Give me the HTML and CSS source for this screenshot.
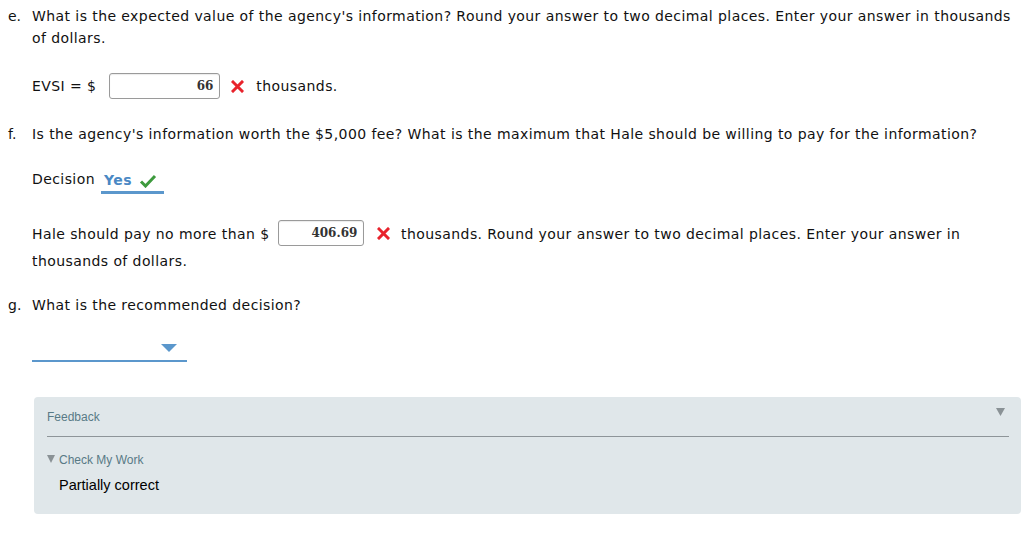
FILE: index.html
```html
<!DOCTYPE html>
<html>
<head>
<meta charset="utf-8">
<link rel="stylesheet" href="styles.css">
</head>
<body>
<div class="page">
  <div class="item item-e">
    <span class="lbl">e.</span>
    <div class="body">What is the expected value of the agency's information? Round your answer to two decimal places. Enter your answer in thousands of dollars.</div>
  </div>
  <div class="row evsi">
    <span>EVSI = $</span>
    <span class="inp w110">66</span>
    <svg class="xmark" width="13" height="13" viewBox="0 0 13 13"><path d="M2 2 L11 11 M11 2 L2 11" stroke="#e8232c" stroke-width="3" stroke-linecap="square"/></svg>
    <span>thousands.</span>
  </div>

  <div class="item item-f">
    <span class="lbl">f.</span>
    <div class="body">Is the agency's information worth the $5,000 fee? What is the maximum that Hale should be willing to pay for the information?</div>
  </div>
  <div class="row decision">
    <span>Decision</span>
    <span class="sel">
      <span class="yes">Yes</span>
      <svg class="check" width="18" height="14" viewBox="0 0 18 14"><path d="M2 7.5 L6.5 12 L16 2" fill="none" stroke="#3d9a3d" stroke-width="3"/></svg>
    </span>
  </div>

  <p class="hale">Hale should pay no more than $ <span class="inp w86">406.69</span> <svg class="xmark" width="13" height="13" viewBox="0 0 13 13"><path d="M2 2 L11 11 M11 2 L2 11" stroke="#e8232c" stroke-width="3" stroke-linecap="square"/></svg> thousands. Round your answer to two decimal places. Enter your answer in thousands of dollars.</p>

  <div class="item item-g">
    <span class="lbl">g.</span>
    <div class="body">What is the recommended decision?</div>
  </div>
  <div class="dropdown">
    <svg width="16" height="8" viewBox="0 0 16 8"><path d="M0 0 H16 L8 8 Z" fill="#5b97cc"/></svg>
  </div>

  <div class="feedback">
    <div class="fb-head">
      <span>Feedback</span>
      <svg width="9" height="8" viewBox="0 0 9 8"><path d="M0 0 H9 L4.5 8 Z" fill="#8a9296"/></svg>
    </div>
    <div class="fb-check"><svg width="8" height="8" viewBox="0 0 8 8"><path d="M0 0 H8 L4 8 Z" fill="#8a9296"/></svg><span>Check My Work</span></div>
    <div class="fb-result">Partially correct</div>
  </div>
</div>
</body>
</html>
```

FILE: styles.css
```css
html, body {
  margin: 0;
  padding: 0;
  background: #fff;
}
.page {
  font-family: "DejaVu Sans", Verdana, sans-serif;
  font-size: 14px;
  letter-spacing: 0.42px;
  color: #111;
  padding: 5px 0 0 8px;
}
.item {
  display: flex;
  line-height: 22px;
}
.lbl {
  width: 24px;
  flex: none;
  letter-spacing: 0;
}
.body {
  flex: 1;
  padding-right: 6px;
}
.row {
  display: flex;
  align-items: center;
  margin-left: 24px;
}
.evsi {
  margin-top: 24px;
  height: 26px;
}
.inp {
  display: inline-flex;
  align-items: center;
  justify-content: flex-end;
  box-sizing: border-box;
  height: 26px;
  border: 1px solid #9a9a9a;
  border-radius: 3px;
  padding-right: 6px;
  font-family: "DejaVu Serif", Georgia, serif;
  font-weight: bold;
  font-size: 12px;
  letter-spacing: 0;
  color: #333;
  box-shadow: inset 0 1px 1px rgba(0,0,0,0.08);
}
.evsi .inp {
  margin-left: 13px;
}
.w110 { width: 111px; }
.w86 { width: 86px; }
.xmark {
  flex: none;
  margin: 0 12px 0 11px;
}
.item-f {
  margin-top: 24px;
}
.decision {
  margin-top: 23px;
  height: 22px;
  line-height: 22px;
  align-items: flex-start;
}
.sel {
  display: inline-flex;
  align-items: center;
  margin-left: 6px;
  padding: 0 7px 0 3px;
  height: 23px;
  border-bottom: 3px solid #5b97cc;
}
.yes {
  color: #4a88c4;
  font-weight: bold;
}
.check {
  margin-left: 7px;
  margin-top: 2px;
}
.hale {
  margin: 31px 50px 0 24px;
  line-height: 27px;
}
.hale .inp {
  vertical-align: middle;
  margin: -4px 4px 0 4px;
}
.hale .xmark {
  vertical-align: middle;
  margin: -3px 6px 0 4px;
}
.item-g {
  margin-top: 19px;
}
.dropdown {
  margin: 28px 0 0 24px;
  width: 145px;
  height: 16px;
  border-bottom: 2px solid #5b97cc;
  display: flex;
  justify-content: flex-end;
  align-items: flex-start;
  padding-right: 10px;
  box-sizing: content-box;
}
.feedback {
  margin: 35px 3px 0 26px;
  background: #e0e7ea;
  border-radius: 4px;
  padding: 0 12px 0 13px;
  height: 117px;
  box-sizing: border-box;
  font-family: "Liberation Sans", Arial, sans-serif;
  letter-spacing: 0;
}
.fb-head {
  display: flex;
  justify-content: space-between;
  align-items: center;
  height: 39px;
  border-bottom: 1px solid #8e9599;
  font-size: 12px;
  color: #587a86;
  padding-right: 4px;
}
.fb-head svg {
  margin-top: -10px;
}
.fb-check {
  display: flex;
  align-items: center;
  margin-top: 16px;
  font-size: 12px;
  color: #587a86;
  height: 14px;
}
.fb-check svg {
  margin-right: 4px;
  margin-top: -2px;
}
.fb-result {
  margin: 9px 0 0 12px;
  font-size: 14.5px;
  color: #000;
  line-height: 18px;
}
```
